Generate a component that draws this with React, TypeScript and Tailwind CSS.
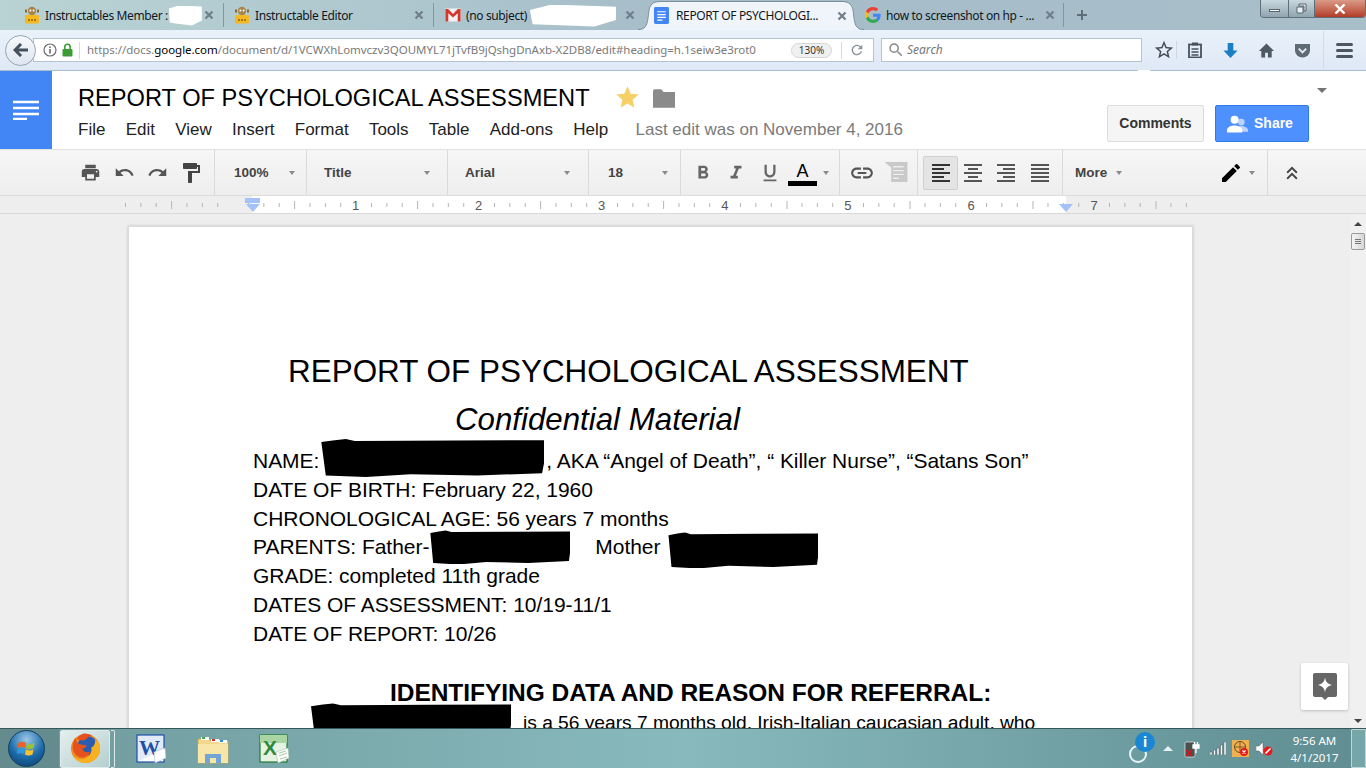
import React from "react";
import {
  MdPrint, MdUndo, MdRedo, MdFormatPaint, MdFormatBold, MdFormatItalic, MdFormatUnderlined, MdLink,
  MdFormatAlignLeft, MdFormatAlignCenter, MdFormatAlignRight, MdFormatAlignJustify, MdEdit,
  MdKeyboardDoubleArrowUp, MdStar, MdRefresh, MdStarBorder, MdSearch,
} from "react-icons/md";

const Redact = ({ className }: { className: string }) => (
  <span
    className={`inline-block bg-black align-top [clip-path:polygon(0_8%,6%_3%,11%_0,15%_5%,60%_4%,100%_3%,100%_60%,99%_90%,70%_96%,40%_93%,20%_100%,2%_96%)] ${className}`}
  />
);

const Caret = ({ className = "" }: { className?: string }) => (
  <span className={`inline-block h-0 w-0 border-x-[3.5px] border-t-[4px] border-x-transparent border-t-[#8a8a8a] ${className}`} />
);

const Close = () => (
  <svg viewBox="0 0 10 10" className="h-[10px] w-[10px] shrink-0">
    <path d="M1.5 1.5l7 7M8.5 1.5l-7 7" stroke="#6f7f8a" strokeWidth="2.2" />
  </svg>
);

const Robot = () => (
  <svg viewBox="0 0 16 18" className="h-[18px] w-[16px] shrink-0">
    <circle cx="8" cy="5" r="4.2" fill="#a8864a" />
    <rect x="1" y="3.5" width="2" height="3" fill="#8a6a35" />
    <rect x="13" y="3.5" width="2" height="3" fill="#8a6a35" />
    <circle cx="6.4" cy="4.5" r="1" fill="#fff" />
    <circle cx="9.6" cy="4.5" r="1" fill="#fff" />
    <rect x="1" y="9" width="14" height="8.5" rx="1.5" fill="#f6b821" />
    <circle cx="5" cy="14" r=".9" fill="#7a5b18" />
    <circle cx="8" cy="14" r=".9" fill="#7a5b18" />
    <circle cx="11" cy="14" r=".9" fill="#7a5b18" />
  </svg>
);

const Gmail = () => (
  <svg viewBox="0 0 16 14" className="h-[14px] w-[16px] shrink-0">
    <rect x="0.5" y="0.5" width="15" height="13" fill="#f2f2f2" />
    <path d="M0.5 13.5V1h2.6L8 6l4.9-5h2.6v12.5h-2.8V5.2L8 9.6 3.3 5.2v8.3z" fill="#d4382c" />
  </svg>
);

const DocIcon = () => (
  <svg viewBox="0 0 16 18" className="h-[17px] w-[15px] shrink-0">
    <rect x="0" y="0" width="16" height="18" rx="1.5" fill="#4285f4" />
    <path d="M3.5 5h9M3.5 8h9M3.5 11h9M3.5 14h5.5" stroke="#fff" strokeWidth="1.3" />
  </svg>
);

const GoogleG = () => (
  <svg viewBox="0 0 48 48" className="h-[16px] w-[16px] shrink-0">
    <path fill="#EA4335" d="M24 9.5c3.5 0 6.7 1.2 9.2 3.6l6.9-6.9C35.9 2.4 30.5 0 24 0 14.6 0 6.5 5.4 2.6 13.2l8 6.2C12.5 13.7 17.8 9.5 24 9.5z" />
    <path fill="#4285F4" d="M47 24.5c0-1.6-.1-3.1-.4-4.5H24v9h12.9c-.6 3-2.2 5.5-4.7 7.2l7.7 6C44.4 38 47 31.8 47 24.5z" />
    <path fill="#FBBC05" d="M10.6 28.6c-.5-1.4-.8-3-.8-4.6s.3-3.2.8-4.6l-8-6.2C.9 16.5 0 20.1 0 24s.9 7.5 2.6 10.8l8-6.2z" />
    <path fill="#34A853" d="M24 48c6.5 0 11.9-2.1 15.9-5.8l-7.7-6c-2.1 1.4-4.9 2.3-8.2 2.3-6.2 0-11.5-4.2-13.4-9.9l-8 6.2C6.5 42.6 14.6 48 24 48z" />
  </svg>
);

const tabFont = "font-['Noto_Sans',sans-serif] text-[12px] tracking-[-0.38px] text-[#10181e] mt-[1px]";

const Tab = ({ icon, label, extra, w }: { icon: React.ReactNode; label: string; extra?: string; w: string }) => (
  <div className={`flex h-[24px] items-center border-r border-[#85969f] pl-[10px] pr-[9px] ${w}`}>
    {icon}
    <span className={`ml-[5px] flex flex-1 items-center whitespace-nowrap ${tabFont}`}>
      {label}
      {extra && <span className={`ml-[1px] inline-block h-[20px] bg-white [clip-path:polygon(0_15%,30%_0,100%_5%,100%_75%,70%_100%,20%_90%,3%_85%)] ${extra}`} />}
    </span>
    <Close />
  </div>
);

const TabBar = () => (
  <div className="flex h-[30px] items-end bg-gradient-to-r from-[#b9d3d4] via-[#a6bdc9] to-[#a8bfca] pl-[14px]">
    <div className="mb-[3px] flex">
      <Tab icon={<Robot />} label="Instructables Member :" extra="w-[33px]" w="w-[210px]" />
      <Tab icon={<Robot />} label="Instructable Editor" w="w-[210px]" />
      <div className="flex h-[24px] w-[211px] items-center pl-[11px] pr-[10px]">
        <Gmail />
        <span className={`ml-[5px] flex flex-1 items-center whitespace-nowrap ${tabFont}`}>
          (no subject)
          <span className="ml-[3px] inline-block h-[22px] w-[86px] bg-white [clip-path:polygon(0_25%,25%_0,100%_10%,100%_70%,75%_100%,3%_90%)]" />
        </span>
        <Close />
      </div>
    </div>
    <div className="relative -mx-[7px] flex h-[29px] w-[226px] items-center pl-[16px] pr-[17px]">
      <svg viewBox="0 0 226 29" className="absolute inset-0 h-[29px] w-[226px]">
        <path d="M0 29C7 29 9 25 10 17L11 9C12 4 15 1 21 1H205C211 1 214 4 215 9L216 17C217 25 219 29 226 29Z" fill="#f0f5fb" />
        <path d="M0 28.500C7 28.500 9 25 10 17L11 9C12 4 15 .5 21 .5H205C211 .5 214 4 215 9L216 17C217 25 219 28.500 226 28.500" fill="none" stroke="#7d919d" strokeWidth="1" />
      </svg>
      <span className="relative flex flex-1 items-center">
        <DocIcon />
        <span className={`ml-[7px] flex-1 whitespace-nowrap ${tabFont}`}>REPORT OF PSYCHOLOGI...</span>
        <Close />
      </span>
    </div>
    <div className="mb-[3px] flex h-[24px] w-[207px] items-center border-r border-[#85969f] pl-[8px] pr-[8px]">
      <GoogleG />
      <span className={`ml-[5px] flex-1 whitespace-nowrap ${tabFont} tracking-[-0.2px]`}>how to screenshot on hp - ...</span>
      <Close />
    </div>
    <svg viewBox="0 0 12 12" className="mb-[9px] ml-[12px] h-[12px] w-[12px]">
      <path d="M6 1v10M1 6h10" stroke="#5f6f7a" strokeWidth="2" />
    </svg>
    <div className="mb-auto ml-auto mr-0 flex h-[18px] w-[106px] overflow-hidden rounded-b-[4px] border border-t-0 border-[#5d6f78]">
      <div className="flex w-[27px] items-center justify-center bg-gradient-to-b from-[#c9d7df] to-[#90a5b0]">
        <span className="mt-[4px] block h-[3px] w-[11px] border border-[#55646c] bg-white" />
      </div>
      <div className="flex w-[27px] items-center justify-center border-x border-[#5d6f78] bg-gradient-to-b from-[#c9d7df] to-[#90a5b0]">
        <svg viewBox="0 0 11 11" className="h-[11px] w-[11px]"><path d="M3 1h7v7H8V3H3zM1 4h6v6H1z" fill="#e9eff3" stroke="#4c5b63" strokeWidth=".9" /></svg>
      </div>
      <div className="flex flex-1 items-center justify-center bg-gradient-to-b from-[#d99a88] to-[#b23a25]">
        <svg viewBox="0 0 12 10" className="h-[10px] w-[12px]"><path d="M1.5 0.5l9 9M10.5 0.5l-9 9" stroke="#fff" strokeWidth="2.4" /></svg>
      </div>
    </div>
  </div>
);

const NavBar = () => (
  <div className="flex h-[40px] items-center bg-gradient-to-b from-[#e9f1fa] to-[#dfe9f6] pl-[5px]">
    <div className="z-10 flex h-[31px] w-[31px] shrink-0 items-center justify-center rounded-full border border-[#93a5b5] bg-gradient-to-b from-[#f7f9fc] to-[#dee6ef]">
      <svg viewBox="0 0 16 14" className="h-[14px] w-[16px]"><path d="M8 1L2 7l6 6M2.5 7H15" stroke="#44525e" strokeWidth="3" fill="none" /></svg>
    </div>
    <div className="-ml-[3px] flex h-[24px] w-[841px] items-center border border-[#b4c4d4] bg-white pl-[9px]">
      <svg viewBox="0 0 14 14" className="h-[14px] w-[14px] shrink-0">
        <circle cx="7" cy="7" r="6" fill="none" stroke="#6c6c6c" strokeWidth="1.2" />
        <rect x="6.2" y="6" width="1.6" height="4.5" fill="#6c6c6c" />
        <rect x="6.2" y="3.4" width="1.6" height="1.6" fill="#6c6c6c" />
      </svg>
      <svg viewBox="0 0 11 14" className="ml-[5px] h-[14px] w-[11px] shrink-0">
        <path d="M2.8 6V4a2.7 2.7 0 0 1 5.4 0v2" fill="none" stroke="#3d9b35" strokeWidth="1.6" />
        <rect x="0.5" y="6" width="10" height="7.5" rx="1" fill="#3d9b35" />
      </svg>
      <span className="ml-[6px] mr-[7px] h-[17px] w-px bg-[#d5dbe2]" />
      <span className="flex-1 whitespace-nowrap font-['Noto_Sans',sans-serif] text-[11.5px] tracking-[-0.04px] text-[#7a7a7a]">
        https://docs.<span className="text-black">google.com</span>/document/d/1VCWXhLomvczv3QOUMYL71jTvfB9jQshgDnAxb-X2DB8/edit#heading=h.1seiw3e3rot0
      </span>
      <span className="flex h-[15px] w-[41px] items-center justify-center rounded-full border border-[#d6d6d6] bg-[#f0f0f0] font-['Noto_Sans',sans-serif] text-[10px] text-[#333]">130%</span>
      <span className="ml-[9px] h-[17px] w-px bg-[#d5dbe2]" />
      <MdRefresh className="ml-[7px] mr-[8px] h-[16px] w-[16px] text-[#8b949c]" />
    </div>
    <div className="ml-[7px] flex h-[24px] w-[261px] items-center border border-[#b4c4d4] bg-white pl-[5px]">
      <MdSearch className="h-[18px] w-[18px] text-[#8b8b8b]" />
      <span className="ml-[2px] font-['Noto_Sans',sans-serif] text-[12px] italic text-[#777]">Search</span>
    </div>
    <MdStarBorder className="ml-[11px] h-[22px] w-[22px] text-[#3f4b55]" />
    <span className="ml-[1px] h-[18px] w-px bg-[#cdd7e2]" />
    <svg viewBox="0 0 14 16" className="ml-[11px] h-[16px] w-[14px]">
      <rect x="1" y="2.5" width="12" height="13" fill="none" stroke="#46535e" strokeWidth="1.8" />
      <rect x="4" y="0.5" width="6" height="3" fill="#46535e" />
      <path d="M3.5 7h7M3.5 10h7M3.5 13h7" stroke="#46535e" strokeWidth="1.3" />
    </svg>
    <svg viewBox="0 0 16 18" className="ml-[21px] h-[17px] w-[15px]"><path d="M5 1h6v8h4.5L8 17 .5 9H5z" fill="#1c7fc4" /></svg>
    <svg viewBox="0 0 18 17" className="ml-[20px] h-[17px] w-[17px]">
      <path d="M9 1L1 9h2.5v7h4v-5h3v5h4V9H17z" fill="#4d5a64" />
    </svg>
    <svg viewBox="0 0 18 16" className="ml-[19px] h-[15px] w-[17px]">
      <path d="M1 1h16v7a8 7.5 0 0 1-16 0z" fill="#5e6b75" />
      <path d="M5 6l4 4 4-4" stroke="#dfe9f6" strokeWidth="2.2" fill="none" />
    </svg>
    <span className="ml-[12px] h-[38px] w-px bg-[#d3dce6]" />
    <div className="ml-[12px] flex w-[17px] flex-col gap-[3px]">
      <span className="h-[3px] rounded-full bg-[#4b5861]" />
      <span className="h-[3px] rounded-full bg-[#4b5861]" />
      <span className="h-[3px] rounded-full bg-[#4b5861]" />
    </div>
  </div>
);

const DocsHeader = () => (
  <div className="relative flex h-[80px] border-y border-t-[#a9bdd3] border-b-[#e2e2e2] bg-white font-['Liberation_Sans',sans-serif]">
    <span className="absolute left-[1138px] -top-px h-[3px] w-[12px] bg-white" />
    <div className="flex w-[52px] items-center justify-center bg-[#4285f4]">
      <svg viewBox="0 0 26 20" className="h-[20px] w-[26px]">
        <path d="M0 2h26M0 8h26M0 14h26M0 19h14" stroke="#fff" strokeWidth="2.4" />
      </svg>
    </div>
    <div className="ml-[26px] flex flex-col pt-[12px]">
      <div className="flex h-[32px] items-center">
        <span className="text-[23.64px] leading-none text-black">REPORT OF PSYCHOLOGICAL ASSESSMENT</span>
        <MdStar className="-mt-[3px] ml-[24px] h-[27px] w-[27px] text-[#f6cf66]" />
        <svg viewBox="0 0 24 20" className="-mt-[2px] ml-[12px] h-[19px] w-[22px]">
          <path d="M0 2a2 2 0 0 1 2-2h7l2.500 3H24v17H0z" fill="#8a8a8a" />
        </svg>
      </div>
      <div className="mt-[3px] flex h-[24px] items-center gap-[20.25px] whitespace-nowrap text-[17px] text-[#222]">
        {["File", "Edit", "View", "Insert", "Format", "Tools", "Table", "Add-ons", "Help"].map((m) => (
          <span key={m}>{m}</span>
        ))}
        <span className="ml-[7px] text-[#7b7b7b]">Last edit was on November 4, 2016</span>
      </div>
    </div>
    <div className="ml-auto mr-[57px] mt-[34px] flex h-[37px] gap-[11px]">
      <div className="flex w-[97px] items-center justify-center rounded-[2px] border border-[#dcdcdc] bg-[#f5f5f5] text-[14px] font-bold text-[#333]">Comments</div>
      <div className="flex w-[94px] items-center gap-[6px] rounded-[2px] border border-[#3079ed] bg-[#4d90fe] pl-[11px] text-[14px] font-bold text-white">
        <svg viewBox="0 0 22 18" className="h-[18px] w-[21px]">
          <circle cx="15" cy="7" r="3.5" fill="#bcd4fb" />
          <path d="M11 17c0-4 2-6 4-6 3 0 7 2 7 4v2z" fill="#bcd4fb" />
          <circle cx="8" cy="4.500" r="4.200" fill="#fff" />
          <path d="M0 18v-3c0-3 5-4.500 8-4.500s8 1.500 8 4.500v3z" fill="#fff" />
        </svg>
        Share
      </div>
    </div>
    <span className="absolute right-[39px] top-[17px] h-0 w-0 border-x-[5px] border-t-[5px] border-x-transparent border-t-[#757575]" />
  </div>
);

const Slot = ({ children, w = "w-[33.5px]", className = "" }: { children: React.ReactNode; w?: string; className?: string }) => (
  <div className={`flex h-[34px] items-center justify-center ${w} ${className}`}>{children}</div>
);

const Drop = ({ label, w, caret }: { label: string; w: string; caret: string }) => (
  <div className={`flex h-full items-center border-r border-[#dadada] pl-[19px] text-[13.5px] font-bold text-[#444] ${w}`}>
    <span className="mt-[1px]">{label}</span>
    <Caret className={`ml-auto ${caret}`} />
  </div>
);

const ic = "h-[21px] w-[21px] text-[#555]";
const Toolbar = () => (
  <div className="flex h-[46px] items-center border-b border-[#dcdcdc] bg-gradient-to-b from-[#f6f6f6] to-[#eeeeee] font-['Liberation_Sans',sans-serif]">
    <div className="flex h-full w-[215px] items-center border-r border-[#dadada] pl-[74px]">
      <Slot><MdPrint className={ic} /></Slot>
      <Slot><MdUndo className={ic} /></Slot>
      <Slot><MdRedo className={ic} /></Slot>
      <Slot><MdFormatPaint className="h-[24px] w-[24px] text-[#444]" /></Slot>
    </div>
    <Drop label="100%" w="w-[92px]" caret="mr-[11px]" />
    <div className="flex h-full w-[141px] items-center border-r border-[#dadada] pl-[17px] text-[13.5px] font-bold text-[#444]"><span className="mt-[1px]">Title</span><Caret className="ml-auto mr-[17px]" /></div>
    <div className="flex h-full w-[141px] items-center border-r border-[#dadada] pl-[17px] text-[13.5px] font-bold text-[#444]"><span className="mt-[1px]">Arial</span><Caret className="ml-auto mr-[18px]" /></div>
    <Drop label="18" w="w-[92px]" caret="mr-[12px]" />
    <div className="flex h-full w-[159px] items-center border-r border-[#dadada] pl-[5px]">
      <Slot><MdFormatBold className="h-[22px] w-[22px] text-[#666]" /></Slot>
      <Slot><MdFormatItalic className="h-[22px] w-[22px] text-[#666]" /></Slot>
      <Slot><MdFormatUnderlined className="h-[22px] w-[22px] text-[#666]" /></Slot>
      <Slot w="w-[32px]">
        <div className="mt-[3px] flex flex-col items-center">
          <span className="text-[18px] leading-[18px] text-black">A</span>
          <span className="mt-[1px] h-[5px] w-[29px] bg-black" />
        </div>
      </Slot>
      <Caret className="ml-[4px]" />
    </div>
    <div className="flex h-full w-[78px] items-center gap-[9px] border-r border-[#dadada] pl-[9px]">
      <MdLink className="h-[26px] w-[26px] text-[#555]" />
      <svg viewBox="0 0 24 22" className="h-[21px] w-[24px]">
        <path d="M0 0h24v21H7v-15z" fill="#c9c9c9" />
        <path d="M9 5h11M9 9h11M9 13h11M9 17h6" stroke="#eee" strokeWidth="1.4" />
      </svg>
    </div>
    <div className="flex h-full w-[145px] items-center border-r border-[#dadada] pl-[5px]">
      <Slot w="w-[35px]" className="rounded-[2px] border border-[#d0d0d0] bg-[#e4e4e4]"><MdFormatAlignLeft className="h-[24px] w-[24px] text-[#333]" /></Slot>
      <Slot className="-ml-[2px]"><MdFormatAlignCenter className="h-[24px] w-[24px] text-[#555]" /></Slot>
      <Slot><MdFormatAlignRight className="h-[24px] w-[24px] text-[#555]" /></Slot>
      <Slot><MdFormatAlignJustify className="h-[24px] w-[24px] text-[#555]" /></Slot>
    </div>
    <div className="flex h-full w-[205px] items-center border-r border-[#dadada] pl-[12px] text-[13.5px] font-bold text-[#444]">
      <span className="mt-[1px]">More</span>
      <Caret className="ml-[9px]" />
      <MdEdit className="ml-[97px] h-[24px] w-[24px] text-black" />
      <Caret className="ml-[6px]" />
    </div>
    <MdKeyboardDoubleArrowUp className="ml-[13px] h-[22px] w-[22px] text-[#444]" />
  </div>
);

const ticks = Array.from({ length: 70 }, (_, i) => ({ x: 171.6 + (i - 3) * 15.375, k: i - 3 })).filter(
  (t) => ((t.k % 8) + 8) % 8 !== 0 && ((t.k % 8) + 8) % 8 !== 4
);
const majors = [171.6, 294.6, 417.6, 540.6, 663.6, 787, 910, 1033, 1156];
const labels = [1, 2, 3, 4, 5, 6, 7];

const Ruler = () => (
  <div className="relative flex h-[18px] border-b border-[#d9d9d9] bg-[#eeeeee]">
    <div className="ml-[252px] h-full w-[814px] bg-white" />
    <svg viewBox="0 0 1366 18" className="absolute inset-0 h-[18px] w-[1366px]">
      {ticks.map((t) => (
        <line key={t.k} x1={t.x} x2={t.x} y1="7" y2="11" stroke="#b5b5b5" strokeWidth="1" />
      ))}
      {majors.map((x) => (
        <line key={x} x1={x} x2={x} y1="5" y2="13" stroke="#b5b5b5" strokeWidth="1" />
      ))}
      <rect x="245" y="2" width="15" height="5" fill="#a3c2fa" />
      <path d="M246 8h14l-7 8z" fill="#a3c2fa" />
      <path d="M1059 8h14l-7 8z" fill="#a3c2fa" />
    </svg>
    {labels.map((n, i) => (
      <span
        key={n}
        className="absolute top-[2px] w-[20px] bg-transparent text-center font-['Liberation_Sans',sans-serif] text-[13px] leading-[16px] text-[#555]"
        style={{ left: 345.5 + i * 123.1 }}
      >
        {n}
      </span>
    ))}
  </div>
);

const Line = ({ children }: { children: React.ReactNode }) => <div className="h-[28.8px] whitespace-nowrap leading-[28.8px]">{children}</div>;

const Page = () => (
  <div className="ml-[128px] mt-[12px] h-[600px] w-[1065px] border border-b-0 border-[#dcdcdc] bg-white pt-[121px] font-['Liberation_Sans',sans-serif] text-black shadow-[0_0_3px_rgba(0,0,0,0.2)]">
    <div className="pl-[159px] text-[31.45px] leading-[48px]">REPORT OF PSYCHOLOGICAL ASSESSMENT</div>
    <div className="h-[51px] pl-[326px] text-[31.25px] italic leading-[48px]">Confidential Material</div>
    <div className="pl-[124px] text-[21px] tracking-[-0.04px]">
      <Line>
        NAME:
        <Redact className="-mt-[8px] ml-[2px] mr-[2px] h-[38px] w-[223px]" />
        , AKA “Angel of Death”, “ Killer Nurse”, “Satans Son”
      </Line>
      <Line>DATE OF BIRTH: February 22, 1960</Line>
      <Line>CHRONOLOGICAL AGE: 56 years 7 months</Line>
      <Line>
        PARENTS: Father-
        <Redact className="-mt-[3px] ml-[1px] h-[34px] w-[140px]" />
        <span className="ml-[25px]">Mother</span>
        <Redact className="-mt-[1px] ml-[8px] h-[36px] w-[150px]" />
      </Line>
      <Line>GRADE: completed 11th grade</Line>
      <Line>DATES OF ASSESSMENT: 10/19-11/1</Line>
      <Line>DATE OF REPORT: 10/26</Line>
      <Line>{"\u00A0"}</Line>
      <div className="h-[30px] pl-[137px] text-[24.5px] font-bold leading-[32px]">IDENTIFYING DATA AND REASON FOR REFERRAL:</div>
      <Line>
        <span className="ml-[58px]" />
        <Redact className="-mt-[4px] h-[36px] w-[200px]" />
        <span className="ml-[12px] inline-block align-top text-[19.25px] leading-[32px]">is a 56 years 7 months old, Irish-Italian caucasian adult, who</span>
      </Line>
    </div>
  </div>
);

const Scrollbar = () => (
  <div className="flex w-[16px] flex-col items-center bg-[#f0f0f0]">
    <span className="mt-[8px] h-0 w-0 border-x-[4px] border-b-[4px] border-x-transparent border-b-[#444]" />
    <div className="mt-[7px] flex h-[17px] w-[14px] flex-col items-center justify-center gap-[1px] rounded-[2px] border border-[#9a9a9a] bg-gradient-to-r from-[#f4f4f4] to-[#d8d8d8]">
      <span className="h-px w-[6px] bg-[#777]" />
      <span className="h-px w-[6px] bg-[#777]" />
      <span className="h-px w-[6px] bg-[#777]" />
    </div>
    <span className="mb-[5px] mt-auto h-0 w-0 border-x-[4px] border-t-[4px] border-x-transparent border-t-[#444]" />
  </div>
);

const DocArea = () => (
  <div className="relative flex h-[514px] overflow-hidden bg-[#eeeeee]">
    <div className="flex-1"><Page /></div>
    <Scrollbar />
    <div className="absolute left-[1301px] top-[449px] flex h-[47px] w-[47px] items-center justify-center rounded-[2px] bg-white shadow-[0_1px_3px_rgba(0,0,0,0.2)]">
      <svg viewBox="0 0 24 27" className="h-[27px] w-[24px]">
        <path d="M2 0h20a2 2 0 0 1 2 2v20a2 2 0 0 1-2 2h-7l-3 3-3-3H2a2 2 0 0 1-2-2V2a2 2 0 0 1 2-2z" fill="#666" />
        <path d="M12 4.5c.7 4.5 2.5 6.3 7 7.5-4.5 1.2-6.3 3-7 7.5-.7-4.5-2.5-6.3-7-7.5 4.5-1.2 6.3-3 7-7.5z" fill="#fff" />
      </svg>
    </div>
  </div>
);

const Start = () => (
  <div className="flex h-[39px] w-[59px] items-center bg-[#5f8487]/70 pl-[8px]">
    <div className="flex h-[37px] w-[37px] items-center justify-center rounded-full border border-[#123e5e] bg-[radial-gradient(circle_at_50%_25%,#9cc8e8,#1b6aa8_55%,#0c3a68)]">
      <svg viewBox="0 0 20 18" className="h-[17px] w-[20px]">
        <path d="M1 3c3-1.5 5-1.5 8 0l-1 5.5c-3-1.5-5-1.5-8 0z" fill="#e8642c" />
        <path d="M10 3.3c3 1.5 5 1.5 8 0l-1 5.4c-3 1.5-5 1.5-8 0z" fill="#96c23c" />
        <path d="M0 9.5c3-1.5 5-1.5 7.8 0l-1 5.4c-3-1.5-5-1.5-8 0z" fill="#2e9ad8" />
        <path d="M8.8 10c3 1.5 5 1.500 8 0l-1 5.4c-3 1.5-5 1.5-8 0z" fill="#f6c22e" />
      </svg>
    </div>
  </div>
);

const Firefox = () => (
  <svg viewBox="0 0 32 32" className="h-[31px] w-[31px]">
    <circle cx="16" cy="16" r="15" fill="#f08a1d" />
    <circle cx="18" cy="13" r="10" fill="#2a5db0" />
    <path d="M31 15a15 15 0 0 1-15 16c-6 0-11-3-13-8 4 4 9 5 13 3 4-2 7-6 6-11 3-1 4-4 4-8 3 2 5 5 5 8z" fill="#f9b122" />
    <path d="M6 5c0 5 3 7 7 7l4 1c0 2-2 3-4 3 0 3 4 5 8 3-1 5-8 8-13 5C2 21 1 11 6 5z" fill="#e5521d" />
    <path d="M13 1c-3 1-5 3-6 5 3 2 6 2 9 1 2-2 3-4 7-4-3-2-7-3-10-2z" fill="#e5521d" />
  </svg>
);

const Word = () => (
  <svg viewBox="0 0 30 30" className="h-[30px] w-[30px]">
    <rect x="1" y="1" width="27" height="27" fill="#fff" stroke="#1d4fa8" strokeWidth="1.2" />
    <path d="M1 1h27v14L1 28z" fill="#3a6fc8" opacity=".15" />
    <text x="3" y="21" fontFamily="Liberation Serif, serif" fontSize="21" fontWeight="bold" fill="#1d4fa8">W</text>
    <path d="M18 18l11-4 1 10-11 5z" fill="#fff" stroke="#aab9cc" strokeWidth=".6" />
  </svg>
);

const Folder = () => (
  <svg viewBox="0 0 32 30" className="h-[30px] w-[32px]">
    <path d="M1 5h11l2 2h17v22H1z" fill="#f3d78d" stroke="#c9a552" strokeWidth=".8" />
    <rect x="4" y="3" width="8" height="3" fill="#fff" />
    <rect x="5" y="3" width="3" height="2" fill="#3eab4a" />
    <rect x="14" y="5" width="8" height="3" fill="#fff" />
    <rect x="15" y="5" width="3" height="2" fill="#c9352b" />
    <rect x="22" y="6" width="8" height="3" fill="#fff" />
    <rect x="23" y="6" width="3" height="2" fill="#2f8fd6" />
    <path d="M1 10h30v19H1z" fill="#f8e5a8" />
    <path d="M8 29V20h16v9h-5v-5h-6v5z" fill="#6fa6d6" />
  </svg>
);

const Excel = () => (
  <svg viewBox="0 0 30 30" className="h-[30px] w-[30px]">
    <rect x="1" y="1" width="27" height="27" fill="#e6f2e2" stroke="#1f7a3a" strokeWidth="1.2" />
    <path d="M1 1h27v8H1z" fill="#a8d5a2" />
    <text x="4" y="21" fontFamily="Liberation Sans, sans-serif" fontSize="21" fontWeight="bold" fill="#2c8c3c">X</text>
    <path d="M17 18l12-4 1 10-11 5z" fill="#fff" stroke="#a9bfa9" strokeWidth=".6" />
    <path d="M20 19l7-2M20 22l8-3M21 25l7-2" stroke="#8fb98f" strokeWidth=".8" />
  </svg>
);

const Taskbar = () => (
  <div className="flex h-[40px] items-center border-t-[1.5px] border-[#37565a] bg-gradient-to-r from-[#6f9a9c] via-[#88babd] to-[#5f8d91] font-['Noto_Sans',sans-serif]">
    <Start />
    <div className="ml-px flex h-[38px] w-[50px] items-center justify-center rounded-[2px] border border-[#e0eaea] bg-gradient-to-br from-[#e4eeee] to-[#b5cfd0]">
      <Firefox />
    </div>
    <div className="ml-[1px] h-[38px] w-[4px] rounded-r-[2px] border border-l-0 border-[#dfeaea]" />
    <div className="ml-[21px]"><Word /></div>
    <div className="ml-[31px]"><Folder /></div>
    <div className="ml-[30px]"><Excel /></div>
    <div className="ml-auto flex items-center">
      <div className="relative h-[22px] w-[22px]">
        <span className="absolute bottom-[-3px] left-0 h-[18px] w-[18px] rounded-full border-2 border-[#e8f4f8]" />
        <span className="absolute -right-[4px] -top-[6px] flex h-[20px] w-[20px] items-center justify-center rounded-full bg-[#1b86d4] text-[14px] font-bold leading-none text-white">i</span>
      </div>
      <span className="ml-[12px] h-0 w-0 border-x-[5px] border-b-[5px] border-x-transparent border-b-[#e8f0f0]" />
      <svg viewBox="0 0 16 18" className="ml-[11px] h-[18px] w-[16px]">
        <rect x="1" y="2" width="10" height="15" rx="1.5" fill="#4a4f52" stroke="#eee" strokeWidth=".7" />
        <path d="M9 5h6v3h-6zM10.5 2v3M13.5 2v3M12 8v5" stroke="#fff" strokeWidth="1.3" fill="#fff" />
        <path d="M2 10l6 6M8 10l-6 6" stroke="#e01010" strokeWidth="1.6" />
      </svg>
      <svg viewBox="0 0 16 13" className="ml-[10px] h-[13px] w-[16px]">
        <path d="M0 10h2v3H0zM3.5 8h2v5h-2zM7 6h2v7H7zM10.5 3h2v10h-2zM14 0h2v13h-2z" fill="#fff" stroke="#26383b" strokeWidth=".4" />
      </svg>
      <svg viewBox="0 0 17 17" className="ml-[6px] h-[17px] w-[17px]">
        <rect width="17" height="17" fill="#f0b050" />
        <circle cx="8" cy="7" r="5.5" fill="none" stroke="#6a4a20" strokeWidth="1" />
        <path d="M2.5 7h11M8 1.5v11" stroke="#6a4a20" strokeWidth=".8" />
        <circle cx="12" cy="12" r="4" fill="#e21b1b" />
        <path d="M10.5 10.5l3 3M13.5 10.5l-3 3" stroke="#fff" strokeWidth="1.2" />
      </svg>
      <svg viewBox="0 0 17 16" className="ml-[7px] h-[16px] w-[17px]">
        <path d="M0 5h3l4-4v13l-4-4H0z" fill="#fff" stroke="#445" strokeWidth=".4" />
        <circle cx="12" cy="10" r="4.5" fill="#e21b1b" />
        <path d="M9.5 12.500l5-5" stroke="#fff" strokeWidth="1.6" />
      </svg>
      <div className="ml-[8px] flex w-[67px] flex-col items-center text-[11.5px] leading-[17px] text-white">
        <span>9:56 AM</span>
        <span>4/1/2017</span>
      </div>
      <div className="ml-[3px] h-[39px] w-[15px] rounded-[1px] border border-[#c2d6d8] bg-[#7fb0b2]/70" />
    </div>
  </div>
);

export default function App() {
  return (
    <div className="flex h-[768px] w-[1366px] flex-col overflow-hidden">
      <TabBar />
      <NavBar />
      <DocsHeader />
      <Toolbar />
      <Ruler />
      <DocArea />
      <Taskbar />
    </div>
  );
}
